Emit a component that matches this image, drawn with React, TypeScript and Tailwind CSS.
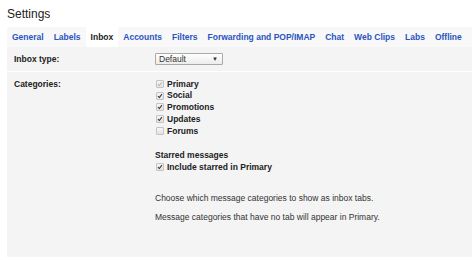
import React from 'react';

const tabs = [
  'General',
  'Labels',
  'Inbox',
  'Accounts',
  'Filters',
  'Forwarding and POP/IMAP',
  'Chat',
  'Web Clips',
  'Labs',
  'Offline',
];

const categories = [
  { label: 'Primary', checked: true, disabled: true },
  { label: 'Social', checked: true },
  { label: 'Promotions', checked: true },
  { label: 'Updates', checked: true },
  { label: 'Forums', checked: false },
];

function Check({ checked, disabled }: { checked: boolean; disabled?: boolean }) {
  return (
    <span className="mr-[3px] inline-flex size-[8px] shrink-0 items-center justify-center rounded-[1px] border border-[#c4c4c4] bg-gradient-to-b from-[#f6f6f6] to-[#e2e2e2]">
      {checked && (
        <svg viewBox="0 0 8 8" className="size-[6px]">
          <path
            d="M1.3 4.2 L3.1 6 L6.6 1.6"
            fill="none"
            stroke={disabled ? '#b5b5b5' : '#333'}
            strokeWidth="1.4"
          />
        </svg>
      )}
    </span>
  );
}

export default function App() {
  return (
    <div className="h-[260px] w-[474px] overflow-hidden bg-white font-['Liberation_Sans',Arial,sans-serif] text-[#222]">
      <div className="flex h-[27px] items-center pl-[7px] text-[12px] leading-none">Settings</div>

      {/* tab strip */}
      <div className="ml-[7px] mr-[2px] flex h-[20px] items-stretch bg-[#f8f8f8] text-[8.5px] font-bold">
        {tabs.map((t) => (
          <span
            key={t}
            className={
              t === 'Inbox'
                ? 'flex items-center bg-white px-[5px] text-[#222]'
                : 'flex items-center px-[5px] text-[#2a54c0]'
            }
          >
            {t}
          </span>
        ))}
      </div>

      {/* panel */}
      <div className="ml-[7px] mr-[2px] h-[210px] bg-[#f4f4f4] text-[8.5px]">
        <div className="grid grid-cols-[148px_1fr] border-b border-white py-[6px]">
          <div className="flex h-[12px] items-center pl-[7px] font-bold">Inbox type:</div>
          <div className="flex h-[12px] w-[68px] items-center justify-between rounded-[1px] border border-[#a9a9a9] bg-gradient-to-b from-white to-[#ececec] pl-[3px] pr-[4px] text-[#333]">
            <span>Default</span>
            <span className="text-[6px]">▼</span>
          </div>
        </div>

        <div className="grid grid-cols-[148px_1fr] pt-[6px]">
          <div className="flex h-[11.75px] items-center pl-[7px] font-bold">Categories:</div>
          <div>
            {categories.map((c) => (
              <div key={c.label} className="flex h-[11.75px] items-center pl-[1px] font-bold">
                <Check checked={c.checked} disabled={c.disabled} />
                {c.label}
              </div>
            ))}

            <div className="mt-[12.5px] flex h-[11.75px] items-center font-bold">Starred messages</div>
            <div className="flex h-[11.75px] items-center pl-[1px] font-bold">
              <Check checked />
              Include starred in Primary
            </div>

            <p className="mt-[19.5px] flex h-[12px] items-center text-[#333]">
              Choose which message categories to show as inbox tabs.
            </p>
            <p className="mt-[7.5px] flex h-[12px] items-center text-[#333]">
              Message categories that have no tab will appear in Primary.
            </p>
          </div>
        </div>
      </div>
    </div>
  );
}
